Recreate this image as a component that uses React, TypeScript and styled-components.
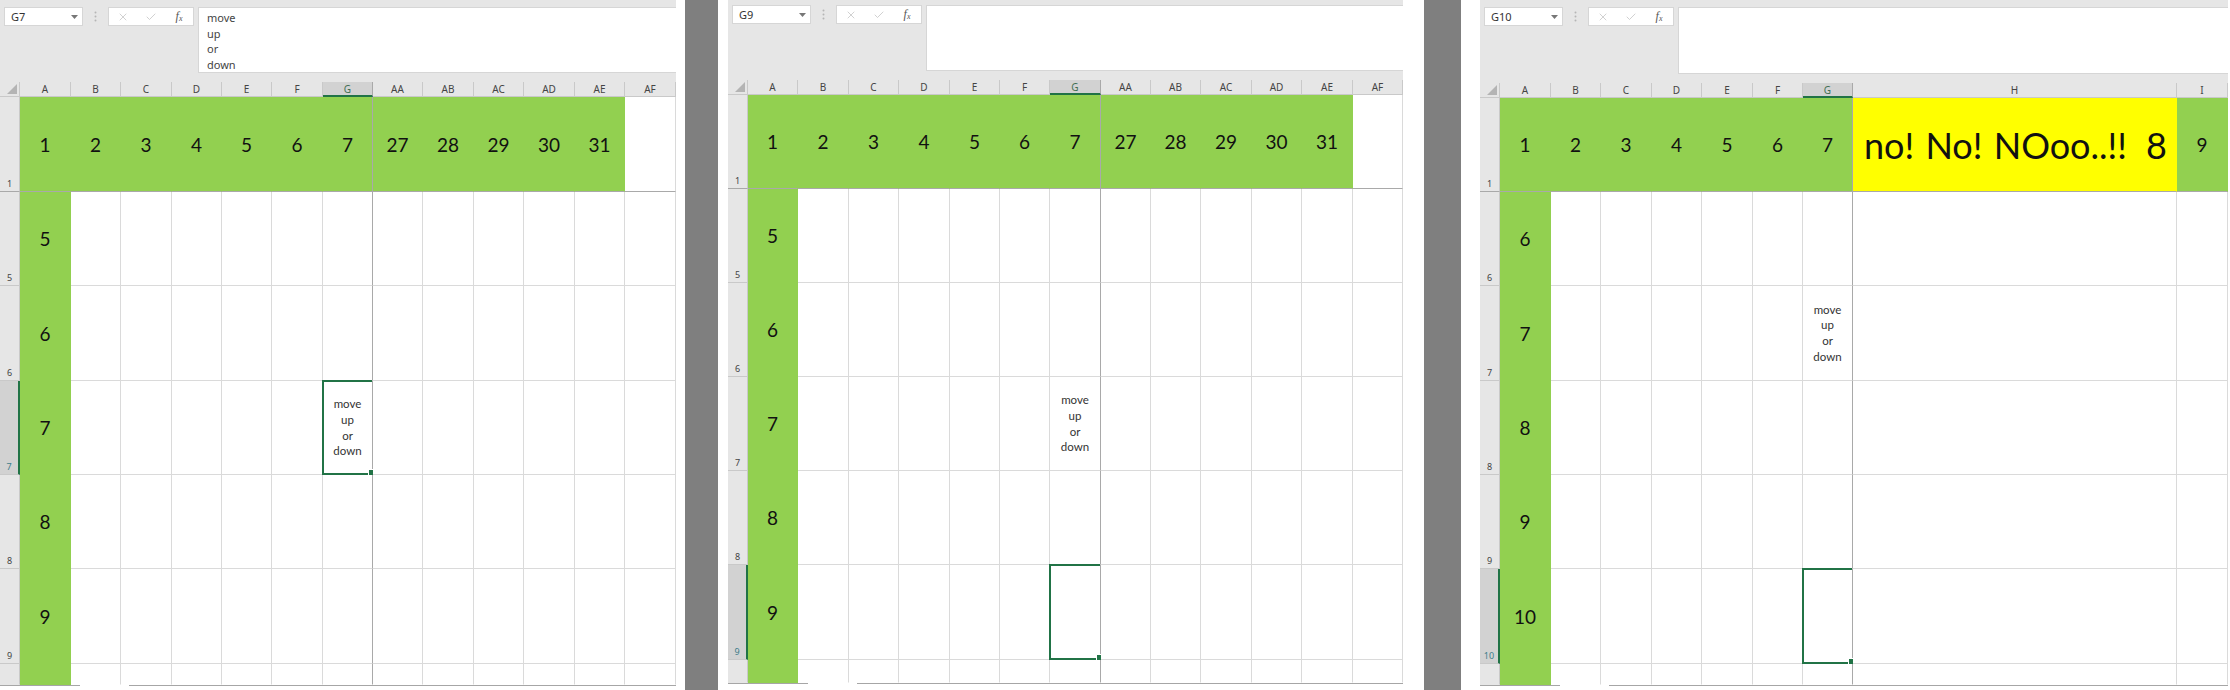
import React from "react";
import styled, { createGlobalStyle } from "styled-components";
import { X, Check } from "lucide-react";

const GREEN = "#92d050";
const YELLOW = "#ffff00";
const GRID = "#dadada";
const FROZEN = "#a9a9a9";
const HEAD_BG = "#e6e6e6";
const HEAD_LINE = "#c9c9c9";
const HEAD_SEL = "#d2d2d2";
const SEL = "#217346";
const CELL_FONT = `"Lato", "Open Sans", sans-serif`;
const UI_FONT = `"Noto Sans", "Open Sans", sans-serif`;

const GlobalStyle = createGlobalStyle`
  html, body { margin: 0; padding: 0; background: #fff; }
  body { font-family: ${UI_FONT}; }
`;

type Col = { label: string; width: number };
type TopCell = { text?: string; fill?: string; shout?: boolean };
type DataRow = { n: number; h: number };

type SheetSpec = {
  padLeft: number;
  padRight: number;
  barHeight: number;
  barTop: number;
  formulaHeight: number;
  name: string;
  formula: string[];
  cols: Col[];
  frozenCol: number;
  row1Height: number;
  row1: TopCell[];
  rows: DataRow[];
  tail: number;
  bottom: number;
  selRow: number;
  noteRow: number;
};

/* page + panels */

const Page = styled.div`
  display: flex;
  width: 2230px;
  height: 690px;
  overflow: hidden;
  background: #fff;
`;

const Divider = styled.div<{ $w: number }>`
  flex: 0 0 ${(p) => p.$w}px;
  background: #7f7f7f;
`;

const Panel = styled.div<{ $left: number; $right: number }>`
  display: flex;
  flex-direction: column;
  padding: 0 ${(p) => p.$right}px 0 ${(p) => p.$left}px;
  background: #fff;
`;

/* formula bar */

const FormulaArea = styled.div<{ $h: number; $top: number }>`
  display: flex;
  align-items: flex-start;
  height: ${(p) => p.$h}px;
  padding: ${(p) => p.$top}px 0 0 4px;
  box-sizing: border-box;
  background: ${HEAD_BG};
`;

const NameBox = styled.div`
  display: flex;
  align-items: center;
  justify-content: space-between;
  width: 79px;
  height: 19px;
  box-sizing: border-box;
  padding: 0 4px 0 6px;
  background: #fff;
  border: 1px solid #d6d6d6;
  font-size: 11px;
  color: #333;
`;

const Grip = styled.div`
  display: flex;
  justify-content: center;
  width: 25px;
  padding-top: 4px;
`;

const FxBox = styled.div`
  display: flex;
  width: 86px;
  height: 19px;
  box-sizing: border-box;
  background: #fff;
  border: 1px solid #d6d6d6;
`;

const FxSlot = styled.span`
  flex: 1;
  display: flex;
  align-items: center;
  justify-content: center;
  color: #bdbdbd;
`;

const FxGlyph = styled.span`
  font-family: "Liberation Serif", serif;
  font-style: italic;
  font-size: 12px;
  color: #555;
  sub {
    font-size: 8px;
    vertical-align: -1px;
  }
`;

const FormulaInput = styled.div<{ $h: number }>`
  flex: 1;
  height: ${(p) => p.$h}px;
  margin-left: 4px;
  box-sizing: border-box;
  padding: 2px 8px 0;
  background: #fff;
  border: 1px solid #d6d6d6;
  border-right: none;
  font-size: 11px;
  line-height: 15.7px;
  color: #444;
`;

/* sheet grid */

const SheetGrid = styled.div<{ $cols: string; $rows: string }>`
  display: grid;
  grid-template-columns: ${(p) => p.$cols};
  grid-template-rows: ${(p) => p.$rows};
  overflow: hidden;
`;

const Corner = styled.div`
  position: relative;
  background: ${HEAD_BG};
  border-right: 1px solid ${HEAD_LINE};
  border-bottom: 1px solid ${HEAD_LINE};
  box-sizing: border-box;
  svg {
    position: absolute;
    right: 2px;
    bottom: 2px;
  }
`;

const ColHead = styled.div<{ $selected: boolean; $edge: string }>`
  display: flex;
  align-items: center;
  justify-content: center;
  box-sizing: border-box;
  background: ${(p) => (p.$selected ? HEAD_SEL : HEAD_BG)};
  border-right: 1px solid ${(p) => p.$edge};
  border-bottom: ${(p) => (p.$selected ? `2px solid ${SEL}` : `1px solid ${HEAD_LINE}`)};
  font-size: 10px;
  color: ${(p) => (p.$selected ? "#3f6f52" : "#444")};
`;

const RowHead = styled.div<{ $selected: boolean; $bottom: string }>`
  display: flex;
  align-items: flex-end;
  justify-content: center;
  box-sizing: border-box;
  padding-bottom: 2px;
  background: ${(p) => (p.$selected ? HEAD_SEL : HEAD_BG)};
  border-right: ${(p) => (p.$selected ? `2px solid ${SEL}` : `1px solid ${HEAD_LINE}`)};
  border-bottom: 1px solid ${(p) => p.$bottom};
  font-size: 9px;
  line-height: 11px;
  color: ${(p) => (p.$selected ? "#3f7d8a" : "#444")};
`;

const Cell = styled.div<{ $fill?: string; $right: string; $bottom: string }>`
  position: relative;
  display: flex;
  align-items: center;
  justify-content: center;
  box-sizing: border-box;
  background: ${(p) => p.$fill ?? "#fff"};
  border-right: 1px solid ${(p) => p.$right};
  border-bottom: 1px solid ${(p) => p.$bottom};
  font-family: ${CELL_FONT};
  color: #111;
`;

const NumText = styled.span`
  font-size: 19px;
`;

const NoteText = styled.span`
  font-size: 11.5px;
  line-height: 15.7px;
  text-align: center;
  color: #333;
`;

const Shout = styled.div`
  display: flex;
  align-items: center;
  justify-content: space-between;
  width: 100%;
  padding: 0 9px 0 11px;
  box-sizing: border-box;
  font-size: 36px;
  word-spacing: 2px;
`;

const Selection = styled.div`
  position: absolute;
  top: -1px;
  left: -1px;
  right: 0;
  bottom: -1px;
  border: 2px solid ${SEL};
  border-right: none;
  pointer-events: none;
`;

const FillHandle = styled.div`
  position: absolute;
  right: -3px;
  bottom: -3px;
  width: 5px;
  height: 5px;
  background: ${SEL};
  border: 1px solid #fff;
`;

const BottomEdge = styled.div<{ $h: number }>`
  display: flex;
  height: ${(p) => p.$h}px;
`;

const EdgePart = styled.div<{ $w?: number; $line: boolean }>`
  flex: ${(p) => (p.$w ? `0 0 ${p.$w}px` : "1")};
  border-top: 1px solid ${(p) => (p.$line ? "#a6a6a6" : "transparent")};
`;

/* pieces */

const Caret = () => (
  <svg width="7" height="4" viewBox="0 0 7 4">
    <path d="M0 0h7L3.5 4z" fill="#777" />
  </svg>
);

const Dots = () => (
  <svg width="3" height="11" viewBox="0 0 3 11">
    <circle cx="1.5" cy="1.5" r="1" fill="#b5b5b5" />
    <circle cx="1.5" cy="5.5" r="1" fill="#b5b5b5" />
    <circle cx="1.5" cy="9.5" r="1" fill="#b5b5b5" />
  </svg>
);

const CornerMark = () => (
  <svg width="10" height="10" viewBox="0 0 10 10">
    <path d="M10 0v10H0z" fill="#b4b4b4" />
  </svg>
);

const Sheet: React.FC<{ spec: SheetSpec }> = ({ spec }) => {
  const { cols, rows, row1, frozenCol } = spec;
  const selCol = 6;
  const colTemplate = ["20px", ...cols.map((c) => `${c.width}px`)].join(" ");
  const rowTemplate = [
    "15px",
    `${spec.row1Height}px`,
    ...rows.map((r) => `${r.h}px`),
    `${spec.tail}px`,
  ].join(" ");

  // r = 0 is row 1, 1..rows.length are data rows, rows.length + 1 is the cut-off row
  const fillAt = (r: number, c: number) => {
    if (c >= cols.length) return undefined;
    if (r === 0) return row1[c]?.fill;
    return c === 0 ? GREEN : undefined;
  };
  const rightColor = (r: number, c: number) => {
    if (c === frozenCol) return FROZEN;
    return fillAt(r, c) ?? fillAt(r, c + 1) ?? GRID;
  };
  const lastRow = rows.length + 1;

  const cells: React.ReactNode[] = [];
  cells.push(
    <Corner key="corner">
      <CornerMark />
    </Corner>
  );
  cols.forEach((c, i) => {
    cells.push(
      <ColHead
        key={`h${i}`}
        $selected={i === selCol}
        $edge={i === frozenCol ? FROZEN : HEAD_LINE}
      >
        {c.label}
      </ColHead>
    );
  });

  for (let r = 0; r <= lastRow; r++) {
    const rowNo = r === 0 ? 1 : r === lastRow ? rows[rows.length - 1].n + 1 : rows[r - 1].n;
    const bottom = r === 0 ? FROZEN : r === lastRow ? "transparent" : HEAD_LINE;
    cells.push(
      <RowHead key={`r${r}`} $selected={rowNo === spec.selRow} $bottom={bottom}>
        {r === lastRow ? "" : rowNo}
      </RowHead>
    );
    cols.forEach((_, c) => {
      const fill = fillAt(r, c);
      const cellBottom =
        r === 0 ? FROZEN : r === lastRow ? "transparent" : fill ?? GRID;
      let content: React.ReactNode = null;
      if (r === 0) {
        const top = row1[c];
        if (top?.shout) {
          content = (
            <Shout>
              <span>no! No! NOoo..!!</span>
              <span>8</span>
            </Shout>
          );
        } else if (top?.text) {
          content = <NumText>{top.text}</NumText>;
        }
      } else if (r !== lastRow) {
        if (c === 0) content = <NumText>{rowNo}</NumText>;
        if (c === selCol && rowNo === spec.noteRow)
          content = (
            <NoteText>
              move
              <br />
              up
              <br />
              or
              <br />
              down
            </NoteText>
          );
      }
      const selected = r !== 0 && r !== lastRow && c === selCol && rowNo === spec.selRow;
      cells.push(
        <Cell
          key={`c${r}-${c}`}
          $fill={fill}
          $right={rightColor(r, c)}
          $bottom={cellBottom}
        >
          {content}
          {selected && (
            <Selection>
              <FillHandle />
            </Selection>
          )}
        </Cell>
      );
    });
  }

  return (
    <Panel $left={spec.padLeft} $right={spec.padRight}>
      <FormulaArea $h={spec.barHeight} $top={spec.barTop}>
        <NameBox>
          <span>{spec.name}</span>
          <Caret />
        </NameBox>
        <Grip>
          <Dots />
        </Grip>
        <FxBox>
          <FxSlot>
            <X size={12} strokeWidth={1.4} />
          </FxSlot>
          <FxSlot>
            <Check size={12} strokeWidth={1.4} />
          </FxSlot>
          <FxSlot>
            <FxGlyph>
              f<sub>x</sub>
            </FxGlyph>
          </FxSlot>
        </FxBox>
        <FormulaInput $h={spec.formulaHeight}>
          {spec.formula.map((line) => (
            <div key={line}>{line}</div>
          ))}
        </FormulaInput>
      </FormulaArea>
      <SheetGrid $cols={colTemplate} $rows={rowTemplate}>
        {cells}
      </SheetGrid>
      <BottomEdge $h={spec.bottom}>
        <EdgePart $w={80} $line />
        <EdgePart $w={49} $line={false} />
        <EdgePart $line />
      </BottomEdge>
    </Panel>
  );
};

/* data */

const letters = ["A", "B", "C", "D", "E", "F", "G"];
const wideCols = (w: number[]): Col[] => letters.map((l, i) => ({ label: l, width: w[i] }));
const farCols = (w: number[]): Col[] =>
  ["AA", "AB", "AC", "AD", "AE", "AF"].map((l, i) => ({ label: l, width: w[i] }));

const numberedRow: TopCell[] = [
  ...["1", "2", "3", "4", "5", "6", "7", "27", "28", "29", "30", "31"].map((t) => ({
    text: t,
    fill: GREEN,
  })),
  {},
];

const sheets: SheetSpec[] = [
  {
    padLeft: 0,
    padRight: 9,
    barHeight: 82,
    barTop: 7,
    formulaHeight: 66,
    name: "G7",
    formula: ["move", "up", "or", "down"],
    cols: [...wideCols([51, 50, 51, 50, 50, 51, 50]), ...farCols([50, 51, 50, 51, 50, 51])],
    frozenCol: 6,
    row1Height: 95,
    row1: numberedRow,
    rows: [
      { n: 5, h: 94 },
      { n: 6, h: 95 },
      { n: 7, h: 94 },
      { n: 8, h: 94 },
      { n: 9, h: 95 },
    ],
    tail: 21,
    bottom: 5,
    selRow: 7,
    noteRow: 7,
  },
  {
    padLeft: 10,
    padRight: 21,
    barHeight: 80,
    barTop: 5,
    formulaHeight: 66,
    name: "G9",
    formula: [],
    cols: [...wideCols([50, 51, 50, 51, 50, 50, 51]), ...farCols([50, 50, 51, 50, 51, 50])],
    frozenCol: 6,
    row1Height: 94,
    row1: numberedRow,
    rows: [
      { n: 5, h: 94 },
      { n: 6, h: 94 },
      { n: 7, h: 94 },
      { n: 8, h: 94 },
      { n: 9, h: 95 },
    ],
    tail: 23,
    bottom: 7,
    selRow: 9,
    noteRow: 7,
  },
  {
    padLeft: 19,
    padRight: 2,
    barHeight: 83,
    barTop: 7,
    formulaHeight: 67,
    name: "G10",
    formula: [],
    cols: [
      ...wideCols([51, 50, 51, 50, 51, 50, 50]),
      { label: "H", width: 324 },
      { label: "I", width: 51 },
    ],
    frozenCol: 6,
    row1Height: 94,
    row1: [
      ...["1", "2", "3", "4", "5", "6", "7"].map((t) => ({ text: t, fill: GREEN })),
      { shout: true, fill: YELLOW },
      { text: "9", fill: GREEN },
    ],
    rows: [
      { n: 6, h: 94 },
      { n: 7, h: 95 },
      { n: 8, h: 94 },
      { n: 9, h: 94 },
      { n: 10, h: 95 },
    ],
    tail: 21,
    bottom: 5,
    selRow: 10,
    noteRow: 7,
  },
];

const App: React.FC = () => (
  <>
    <GlobalStyle />
    <Page>
      <Sheet spec={sheets[0]} />
      <Divider $w={33} />
      <Sheet spec={sheets[1]} />
      <Divider $w={37} />
      <Sheet spec={sheets[2]} />
    </Page>
  </>
);

export default App;
